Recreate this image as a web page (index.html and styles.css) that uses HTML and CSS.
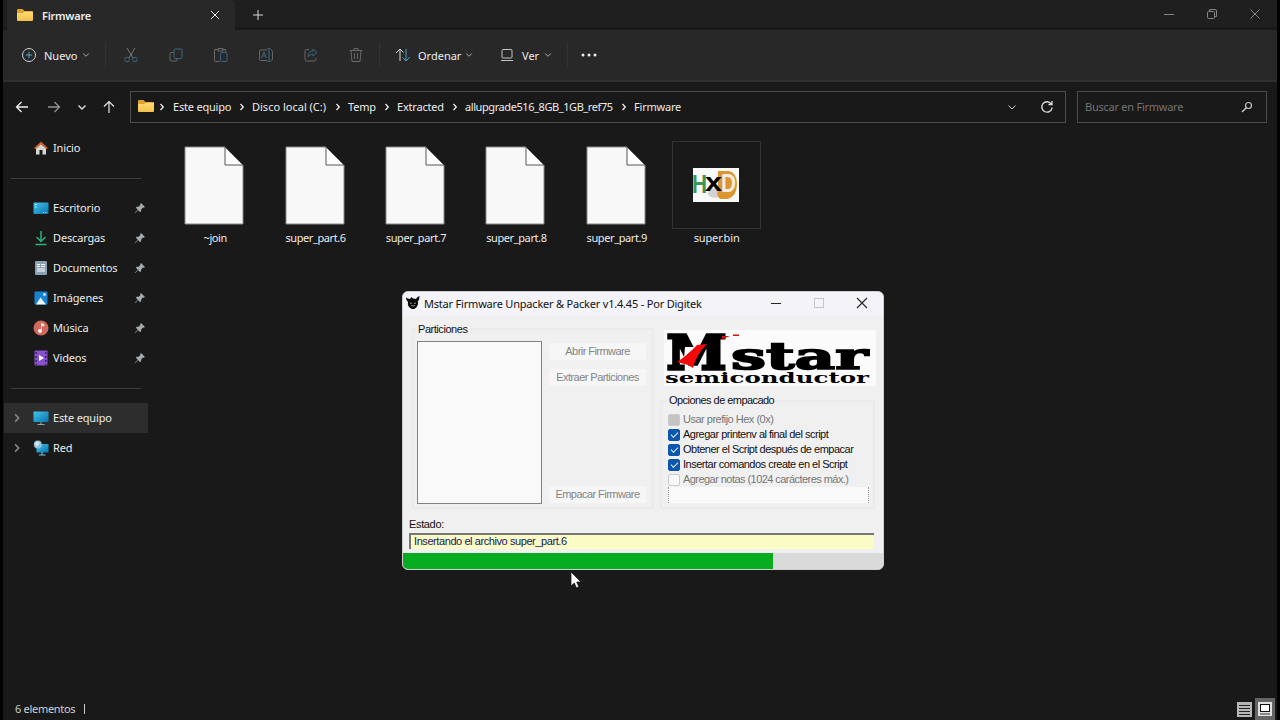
FILE: index.html
```html
<!DOCTYPE html>
<html lang="es">
<head>
    <meta charset="UTF-8">
    <meta name="viewport" content="width=device-width, initial-scale=1.0">
    <title>Firmware</title>
    <link rel="stylesheet" href="styles.css">
</head>
<body>
    <svg class="defs" width="0" height="0">
        <linearGradient id="blue" x1="0" y1="0" x2="1" y2="1"><stop offset="0" stop-color="#43c4ee"/><stop offset="1" stop-color="#0873ae"/></linearGradient>
        <linearGradient id="gold" x1="0" y1="0" x2="0" y2="1"><stop offset="0" stop-color="#ffdc70"/><stop offset="1" stop-color="#f3c04d"/></linearGradient>
        <symbol id="folder" viewBox="0 0 16 14"><path d="M0 2Q0 1 1 1H5.5L7.5 3H15Q16 3 16 4V8H0z" fill="#e0a02c"/><path d="M0 5H6L8 3.7H15Q16 3.7 16 4.7V12Q16 13 15 13H1Q0 13 0 12z" fill="url(#gold)"/></symbol>
        <symbol id="chev" viewBox="0 0 8 8"><path d="M1.2 2.5L4 5.3L6.8 2.5" fill="none" stroke="currentColor"/></symbol>
        <symbol id="right" viewBox="0 0 8 8"><path d="M2.5 1L5.3 4L2.5 7" fill="none" stroke="currentColor" stroke-width="1.3"/></symbol>
        <symbol id="pin" viewBox="0 0 12 12"><path d="M7 1L11 5L9.8 5.8L8.9 5.6L7.2 7.4L7 9.6L5.9 10L4 8L1.5 11L1 10.5L3.7 7.7L2 5.8L2.6 4.8L4.7 4.7L6.4 3L6.2 2z" fill="#a5acb0"/></symbol>
        <symbol id="page" viewBox="0 0 60 80"><path d="M1 1H41L59 19V78H1z" fill="#f8f8f8" stroke="#8a8a8a"/><path d="M41 1V19H59z" fill="#fff" stroke="#555"/></symbol>
    </svg>
    <div class="window">
        <div class="tabbar">
            <div class="tab">
                <svg class="tab-icon" width="16" height="14"><use href="#folder"/></svg>
                <span class="tab-title">Firmware</span>
                <svg class="tab-close" width="10" height="10" viewBox="0 0 10 10"><path d="M1 1L9 9M9 1L1 9" stroke="#e8e8e8" fill="none"/></svg>
            </div>
            <svg class="new-tab" width="12" height="12" viewBox="0 0 12 12"><path d="M6 1V11M1 6H11" stroke="#d8d8d8" fill="none"/></svg>
            <div class="controls">
                <svg width="12" height="12" viewBox="0 0 12 12"><path d="M1 6.5H11" stroke="#858585"/></svg>
                <svg width="12" height="12" viewBox="0 0 12 12" fill="none" stroke="#858585"><rect x="1.5" y="3.5" width="7" height="7" rx="1"/><path d="M3.5 3V1.5H9Q10.5 1.5 10.5 3V8.5H9"/></svg>
                <svg width="12" height="12" viewBox="0 0 12 12"><path d="M1.5 1.5L10.5 10.5M10.5 1.5L1.5 10.5" stroke="#858585"/></svg>
            </div>
        </div>

        <div class="toolbar">
            <div class="tool new">
                <svg width="16" height="16" viewBox="0 0 16 16" fill="none"><circle cx="8" cy="8" r="6.5" stroke="#c9d2d8"/><path d="M8 4.8V11.2M4.8 8H11.2" stroke="#56a5cf"/></svg>
                <span>Nuevo</span>
                <svg class="caret" width="8" height="8"><use href="#chev"/></svg>
            </div>
            <i class="sep"></i>
            <div class="tool-icons">
                <svg width="16" height="16" viewBox="0 0 16 16" fill="none"><path d="M4 1L10 11M12 1L6 11" stroke="#787878"/><circle cx="4" cy="12.5" r="2.3" stroke="#3c6680"/><circle cx="12" cy="12.5" r="2.3" stroke="#3c6680"/></svg>
                <svg width="16" height="16" viewBox="0 0 16 16" fill="none"><path d="M5.5 5.5H3Q2 5.5 2 6.500V13Q2 14 3 14H8Q9 14 9 13V11.500" stroke="#666"/><rect x="6" y="2" width="8" height="9.500" rx="1" stroke="#3c6680"/></svg>
                <svg width="16" height="16" viewBox="0 0 16 16" fill="none"><path d="M6.500 14.500H2.500Q1.500 14.500 1.500 13.500V2.500H5V1.500H10V2.500H12.500V4.500M5 2V4H10V2" stroke="#6a6a6a"/><rect x="7.500" y="5.500" width="6.500" height="9" rx="1" stroke="#3c6680"/></svg>
                <svg width="16" height="16" viewBox="0 0 16 16" fill="none"><path d="M9 13.500H2.500Q1.500 13.500 1.500 12.500V4Q1.500 3 2.500 3H9M13 3Q14.500 3 14.500 4.500V12Q14.500 13.500 13 13.500" stroke="#666"/><path d="M3.500 11L6 5L8.500 11M4.500 9H7.500M11 2V14.500M9.500 1.500H12.500M9.500 14.500H12.500" stroke="#3c6680"/></svg>
                <svg width="16" height="16" viewBox="0 0 16 16" fill="none"><path d="M6 2.500H3.500Q2 2.500 2 4V12.500Q2 14 3.500 14H11.500Q13 14 13 12.500V11" stroke="#666"/><path d="M10 2L14 5.500L10 9V7Q7 7 5 10Q5 4 10 4z" stroke="#3c6680"/></svg>
                <svg width="16" height="16" viewBox="0 0 16 16" fill="none" stroke="#6a6a6a"><path d="M1.500 3.500H14.500M6 3.500V1.500H10V3.500M3 3.500L4 14.500H12L13 3.500M6.500 6V12M9.500 6V12"/></svg>
            </div>
            <i class="sep"></i>
            <div class="tool sort">
                <svg width="16" height="16" viewBox="0 0 16 16" fill="none"><path d="M5 14V2M1 6L5 2L8.500 5.500" stroke="#d8d8d8"/><path d="M11 2V14M7.500 10.500L11 14L15 10" stroke="#4c9bc7"/></svg>
                <span>Ordenar</span>
                <svg class="caret" width="8" height="8"><use href="#chev"/></svg>
            </div>
            <div class="tool view">
                <svg width="14" height="14" viewBox="0 0 14 14" fill="none" stroke="#c4c4c4"><rect x="2" y="1.500" width="10" height="8.500" rx="1"/><path d="M1 12.500H13"/></svg>
                <span>Ver</span>
                <svg class="caret" width="8" height="8"><use href="#chev"/></svg>
            </div>
            <i class="sep last"></i>
            <svg class="more" width="16" height="4" viewBox="0 0 16 4" fill="#eee"><circle cx="2" cy="2" r="1.500"/><circle cx="8" cy="2" r="1.500"/><circle cx="14" cy="2" r="1.500"/></svg>
        </div>

        <div class="navbar">
            <div class="arrows">
                <svg width="14" height="14" viewBox="0 0 14 14" stroke="#f2f2f2" fill="none" stroke-width="1.300"><path d="M13 7H1.500M6.500 2L1.500 7L6.500 12"/></svg>
                <svg width="14" height="14" viewBox="0 0 14 14" stroke="#929292" fill="none" stroke-width="1.300"><path d="M1 7H12.500M7.500 2L12.500 7L7.500 12"/></svg>
                <svg width="10" height="10" viewBox="0 0 10 10" stroke="#ddd" fill="none" stroke-width="1.400"><path d="M1.500 3.500L5 7L8.500 3.500"/></svg>
                <svg width="14" height="14" viewBox="0 0 14 14" stroke="#e4e4e4" fill="none" stroke-width="1.200"><path d="M7 13V1.500M2 6.500L7 1.500L12 6.500"/></svg>
            </div>
            <div class="address">
                <svg class="addr-folder" width="16" height="14"><use href="#folder"/></svg>
                <svg class="crumb-arrow first" width="8" height="8"><use href="#right"/></svg>
                <span class="c1">Este equipo</span><svg class="crumb-arrow" width="8" height="8"><use href="#right"/></svg>
                <span class="c2">Disco local (C:)</span><svg class="crumb-arrow" width="8" height="8"><use href="#right"/></svg>
                <span class="c3">Temp</span><svg class="crumb-arrow" width="8" height="8"><use href="#right"/></svg>
                <span class="c4">Extracted</span><svg class="crumb-arrow" width="8" height="8"><use href="#right"/></svg>
                <span class="c5">allupgrade516_8GB_1GB_ref75</span><svg class="crumb-arrow" width="8" height="8"><use href="#right"/></svg>
                <span class="c6">Firmware</span>
                <svg class="addr-caret" width="10" height="10" viewBox="0 0 10 10"><path d="M1.500 3.500L5 7L8.500 3.500" fill="none" stroke="#ccc"/></svg>
                <svg class="refresh" width="14" height="14" viewBox="0 0 14 14" fill="none" stroke="#ddd" stroke-width="1.300"><path d="M11.300 4A5.200 5.200 0 1 0 12.200 7.500M12 1V4.500H8.500"/></svg>
            </div>
            <div class="search">
                <span>Buscar en Firmware</span>
                <svg width="12" height="12" viewBox="0 0 12 12" fill="none" stroke="#c4c4c4"><circle cx="7.500" cy="4.500" r="3" stroke-width="1.200"/><path d="M5.300 6.700L1 11" stroke-width="1.500"/></svg>
            </div>
        </div>

        <div class="main">
            <div class="sidebar">
                <div class="row home">
                    <svg class="ico" width="16" height="16" viewBox="0 0 16 16"><path d="M3 7L8 3L13 7V14.500H9.500V10H6.500V14.500H3z" fill="#d9d4d1"/><path d="M1 8L8 1.500L15 8L13.500 9L8 4.500L2.500 9z" fill="#c6602c"/></svg>
                    <span>Inicio</span>
                </div>
                <hr>
                <div class="row">
                    <svg class="ico" width="16" height="16" viewBox="0 0 16 16"><rect x="0.500" y="2.500" width="15" height="11.500" rx="1" fill="url(#blue)"/><path d="M2 4.500H3.500M2 7H3.500M10 12.500H11M12.500 12.500H13.500" stroke="#dff6ff" stroke-width="1.200"/></svg>
                    <span>Escritorio</span><svg class="pin" width="12" height="12"><use href="#pin"/></svg>
                </div>
                <div class="row">
                    <svg class="ico" width="16" height="16" viewBox="0 0 16 16"><path d="M8 1V11M3.500 7L8 11.500L12.500 7M2.500 14.500H13.500" fill="none" stroke="#2fae7c" stroke-width="1.500"/></svg>
                    <span>Descargas</span><svg class="pin" width="12" height="12"><use href="#pin"/></svg>
                </div>
                <div class="row">
                    <svg class="ico" width="16" height="16" viewBox="0 0 16 16"><rect x="2" y="1" width="12" height="14" rx="1" fill="#8ba1b1"/><path d="M4 4.500H7M8 4.500H12M4 6.500H7M8 6.500H12M4 9H12M4 11H12" stroke="#fff"/></svg>
                    <span>Documentos</span><svg class="pin" width="12" height="12"><use href="#pin"/></svg>
                </div>
                <div class="row">
                    <svg class="ico" width="16" height="16" viewBox="0 0 16 16"><rect x="1.500" y="1.500" width="13" height="13" rx="1" fill="#1684d2"/><path d="M3 14.500L7.500 7.500L13 14.500z" fill="#eef8ff"/><circle cx="11.500" cy="4.500" r="1.300" fill="#fff"/></svg>
                    <span>Imágenes</span><svg class="pin" width="12" height="12"><use href="#pin"/></svg>
                </div>
                <div class="row">
                    <svg class="ico" width="16" height="16" viewBox="0 0 16 16"><circle cx="8" cy="8" r="7.500" fill="#d3685c"/><path d="M8.500 10.500V3.500L11 4.500V6L8.500 5.500" fill="#fff" stroke="#fff" stroke-width=".6"/><circle cx="7" cy="11" r="1.900" fill="#fff"/></svg>
                    <span>Música</span><svg class="pin" width="12" height="12"><use href="#pin"/></svg>
                </div>
                <div class="row">
                    <svg class="ico" width="16" height="16" viewBox="0 0 16 16"><rect x="1.500" y="0.500" width="13" height="15" rx="1" fill="#8653cc"/><path d="M3.200 2V15M12.800 2V15" stroke="#3f2173" stroke-width="1.500" stroke-dasharray="2 2"/><path d="M6 5L11 8L6 11z" fill="#fff"/></svg>
                    <span>Videos</span><svg class="pin" width="12" height="12"><use href="#pin"/></svg>
                </div>
                <hr>
                <div class="row selected">
                    <svg class="expand" width="10" height="10" viewBox="0 0 8 8"><use href="#right"/></svg>
                    <svg class="ico" width="16" height="16" viewBox="0 0 16 16"><rect x="0.500" y="1.500" width="15" height="10.500" rx=".7" fill="url(#blue)"/><path d="M8 12V14.500M4.500 14.500H11.500" stroke="#8da6b3"/></svg>
                    <span>Este equipo</span>
                </div>
                <div class="row">
                    <svg class="expand" width="10" height="10" viewBox="0 0 8 8"><use href="#right"/></svg>
                    <svg class="ico" width="16" height="16" viewBox="0 0 16 16"><rect x="3.500" y="4" width="12" height="8.500" fill="url(#blue)"/><path d="M9 12V15M6 15H12.500" stroke="#7ec6e5"/><circle cx="4.800" cy="4.500" r="4" fill="#8fc2d7"/><path d="M2 3Q5 0 7 3L5 5L4 7L2.500 5z" fill="#d3e8ef"/></svg>
                    <span>Red</span>
                </div>
            </div>
            <div class="files">
                <div class="file"><svg class="page" width="60" height="80"><use href="#page"/></svg><span>~join</span></div>
                <div class="file"><svg class="page" width="60" height="80"><use href="#page"/></svg><span>super_part.6</span></div>
                <div class="file"><svg class="page" width="60" height="80"><use href="#page"/></svg><span>super_part.7</span></div>
                <div class="file"><svg class="page" width="60" height="80"><use href="#page"/></svg><span>super_part.8</span></div>
                <div class="file"><svg class="page" width="60" height="80"><use href="#page"/></svg><span>super_part.9</span></div>
                <div class="file">
                    <div class="thumb">
                        <svg width="46" height="34" viewBox="0 0 46 34"><rect width="46" height="34" fill="#fafafa"/><ellipse cx="22" cy="25" rx="7" ry="5" fill="#d2d2d5"/><path d="M25 3H36Q44 5 44 16Q44 28 35 31H27Q23 28 25 22z" fill="#dc962f"/><text x="-1" y="25" class="hxd-h" textLength="15" lengthAdjust="spacingAndGlyphs">H</text><text x="28" y="24" class="hxd-d" textLength="15" lengthAdjust="spacingAndGlyphs">D</text><text x="12" y="23" class="hxd-x" textLength="17" lengthAdjust="spacingAndGlyphs">x</text></svg>
                    </div>
                    <span class="bin">super.bin</span>
                </div>
            </div>
        </div>

        <div class="statusbar">
            <span>6 elementos</span><i></i>
            <svg class="list-view" width="15" height="15" viewBox="0 0 15 15"><rect width="15" height="15" fill="#b6b6b6"/><path d="M2 3.500H13M2 6.500H13M2 9.500H13M2 12.500H13" stroke="#222"/></svg>
            <div class="icon-view"><svg width="14" height="14" viewBox="0 0 14 14"><rect width="14" height="14" fill="#e0e0e0"/><rect x="2.500" y="2.500" width="9" height="7" fill="#fff" stroke="#111"/><path d="M2 12H12" stroke="#333"/></svg></div>
        </div>
    </div>

    <div class="dialog">
        <div class="titlebar">
            <svg width="14" height="14" viewBox="0 0 14 14"><path d="M0 1.500L2 2.500L4 3L5.500 1L7 2.500L10 3L11.500 1L13.500 0L13 4L11.800 5Q13 10 9 12.500Q7 13.500 5 12.500Q1 10 2 6L.5 4z" fill="#080808"/><path d="M4 7L6 7.500M10 7L8 7.500M5 9.500L7 10L9 9.500" stroke="#ccc" stroke-width=".7" fill="none"/></svg>
            <span>Mstar Firmware Unpacker &amp; Packer v1.4.45 - Por Digitek</span>
            <div class="dlg-controls">
                <svg width="12" height="12" viewBox="0 0 12 12"><path d="M1 6.500H11" stroke="#222" stroke-width="1.200"/></svg>
                <svg width="12" height="12" viewBox="0 0 12 12"><rect x="1.500" y="1.500" width="9" height="9" fill="none" stroke="#c5c5cb"/></svg>
                <svg width="12" height="12" viewBox="0 0 12 12"><path d="M1 1L11 11M11 1L1 11" stroke="#222" stroke-width="1.100"/></svg>
            </div>
        </div>
        <div class="dlg-body">
            <div class="group parts">
                <span class="legend">Particiones</span>
                <div class="listbox"></div>
                <div class="buttons">
                    <button disabled>Abrir Firmware</button>
                    <button disabled>Extraer Particiones</button>
                    <button class="pack" disabled>Empacar Firmware</button>
                </div>
            </div>
            <div class="right">
                <svg class="logo" width="212" height="56" viewBox="0 0 212 56"><rect width="212" height="56" fill="#fbfbfb"/><text class="logo-m" x="3" y="39" textLength="59" lengthAdjust="spacingAndGlyphs">M</text><text class="logo-star" x="67" y="39" textLength="137" lengthAdjust="spacingAndGlyphs">star</text><path d="M21 17H32L25 23L20 28z" fill="#fbfbfb"/><path d="M43 14Q32 25 29 38L24 35L13 32Q24 25 33 15z" fill="#f40808"/><path d="M58 6H66L61 8L58 10zM69 4.500H75V6H69z" fill="#d01414"/><text class="logo-semi" x="1" y="52.500" textLength="204" lengthAdjust="spacingAndGlyphs">semiconductor</text></svg>
                <div class="group options">
                    <span class="legend">Opciones de empacado</span>
                    <div class="check off"><i class="box gray"></i><span>Usar prefijo Hex (0x)</span></div>
                    <div class="check"><i class="box on"></i><span>Agregar printenv al final del script</span></div>
                    <div class="check"><i class="box on"></i><span>Obtener el Script después de empacar</span></div>
                    <div class="check"><i class="box on"></i><span>Insertar comandos create en el Script</span></div>
                    <div class="check off"><i class="box"></i><span class="long">Agregar notas (1024 carácteres máx.)</span></div>
                    <div class="notes"></div>
                </div>
            </div>
        </div>
        <div class="state-label">Estado:</div>
        <div class="state">Insertando el archivo super_part.6</div>
        <div class="progress"><div class="bar" style="width: 77%"></div></div>
    </div>

    <svg class="cursor" width="12" height="18" viewBox="0 0 12 18"><path d="M1 1V15L4.300 12L6.300 16.800L8.800 15.700L6.700 11H11z" fill="#fff" stroke="#111" stroke-width=".7"/></svg>
</body>
</html>
```
FILE: styles.css
```css
* {
    box-sizing: border-box;
}
body {
    margin: 0;
    width: 1280px;
    height: 720px;
    overflow: hidden;
    background: #000;
    color: #ececec;
    font-family: "Noto Sans", "Open Sans", sans-serif;
    font-size: 11px;
    white-space: nowrap;
}
svg {
    display: block;
    flex: none;
}
.defs {
    position: absolute;
}
.window {
    display: flex;
    flex-direction: column;
    width: 1274px;
    height: 720px;
    margin-left: 3px;
    background: #191919;
}

/* tabs */
.tabbar {
    display: flex;
    align-items: center;
    height: 30px;
    background: #1f1f1f;
    border-bottom: 3px solid #191919;
}
.tab {
    display: flex;
    align-items: center;
    width: 228px;
    height: 30px;
    margin: 0 0 -3px 4px;
    padding-left: 10px;
    background: #282828;
    border-radius: 0 6px 0 0;
}
.tab-title {
    width: 168px;
    margin-left: 9px;
    font-weight: 600;
    font-size: 11px;
    letter-spacing: -0.25px;
}
.new-tab {
    margin: 3px 0 0 17px;
}
.controls {
    display: flex;
    gap: 31px;
    margin-left: auto;
    margin-right: 16px;
}

/* toolbar */
.toolbar {
    display: flex;
    align-items: center;
    height: 52px;
    flex: none;
    background: #282828;
    border-bottom: 2px solid #303030;
}
.tool {
    display: flex;
    align-items: center;
    height: 20px;
}
.tool .caret {
    color: #aaa;
}
.new {
    width: 84px;
    margin-left: 18px;
}
.new span {
    width: 38px;
    margin-left: 7px;
}
.sep {
    width: 1px;
    height: 26px;
    background: #333;
}
.tool-icons {
    display: flex;
    gap: 29px;
    width: 273px;
    padding-left: 17px;
}
.sort {
    width: 104px;
    padding-left: 15px;
}
.sort span {
    width: 47px;
    margin-left: 7px;
}
.view {
    width: 83px;
    padding-left: 16px;
}
.view span {
    width: 22px;
    margin-left: 8px;
}
.more {
    margin-left: 13px;
}

/* address bar */
.navbar {
    display: flex;
    align-items: center;
    height: 50px;
    flex: none;
}
.arrows {
    display: flex;
    align-items: center;
    width: 127px;
    padding-left: 12px;
}
.arrows svg:nth-child(2) {
    margin: 0 16px 0 18px;
}
.arrows svg:nth-child(4) {
    margin-left: 15px;
}
.address {
    display: flex;
    align-items: center;
    width: 936px;
    height: 32px;
    border: 1px solid #4c4c4c;
}
.addr-folder {
    margin: -3px 0 0 7px;
}
.crumb-arrow {
    margin: 0 6px 0 7px;
}
.crumb-arrow.first {
    margin: 0 7px 0 4px;
}
.c1 { width: 58px; }
.c2 { width: 75px; }
.c3 { width: 28px; }
.c4 { width: 47px; }
.c5 { width: 148px; }
.c6 { width: 47px; }
.address span {
    padding-bottom: 2px;
    letter-spacing: -0.2px;
}
.address .c2 {
    letter-spacing: 0;
}
.address .c5 {
    letter-spacing: -0.42px;
}
.addr-caret {
    margin-left: auto;
}
.refresh {
    margin: 0 11px 0 23px;
}
.search {
    display: flex;
    align-items: center;
    justify-content: space-between;
    width: 190px;
    height: 32px;
    margin-left: 11px;
    padding: 0 13px 0 7px;
    border: 1px solid #4c4c4c;
    color: #747474;
}
.search span {
    padding-bottom: 2px;
    letter-spacing: -0.25px;
}

/* content */
.main {
    display: flex;
    flex: 1;
}
.sidebar {
    width: 145px;
    padding: 1px 0 0 1px;
}
.row {
    position: relative;
    display: flex;
    align-items: center;
    height: 30px;
    padding-left: 29px;
}
.row .ico {
    margin-right: 4px;
}
.row span {
    padding-bottom: 2px;
    letter-spacing: -0.15px;
}
.row .expand {
    position: absolute;
    left: 8px;
    color: #888;
}
.row .pin {
    position: absolute;
    right: 2px;
}
.row.selected {
    background: #2d2d2d;
}
.sidebar hr {
    width: 130px;
    height: 1px;
    margin: 15px 0 14px 7px;
    border: none;
    background: #3c3c3c;
}
.files {
    display: flex;
    padding: 9px 0 0 16px;
}
.file {
    display: flex;
    flex-direction: column;
    align-items: center;
    width: 100.4px;
}
.file span {
    padding-left: 2px;
    letter-spacing: -0.4px;
}
.file .bin {
    padding-left: 1px;
    letter-spacing: -0.15px;
}
.page {
    margin: 5px 0 4px;
}
.thumb {
    display: flex;
    align-items: center;
    justify-content: center;
    width: 89px;
    height: 88px;
    margin-bottom: 1px;
    border: 1px solid #343434;
}
.hxd-h, .hxd-d, .hxd-x {
    font: bold 25px "Liberation Sans", sans-serif;
}
.hxd-h { fill: #3d9557; }
.hxd-d { fill: #f4ece0; }
.hxd-x { fill: #000; }

/* status bar */
.statusbar {
    display: flex;
    align-items: center;
    height: 22px;
    padding-left: 12px;
    color: #d0d0d0;
    letter-spacing: -0.3px;
}
.statusbar span {
    padding-bottom: 1px;
}
.statusbar i {
    width: 1px;
    height: 10px;
    margin-left: 9px;
    background: #ccc;
}
.list-view {
    margin-left: auto;
}
.icon-view {
    display: flex;
    align-items: center;
    justify-content: center;
    width: 20px;
    height: 22px;
    margin: 0 2px 0 3px;
    background: #646464;
}

/* packer window */
.dialog {
    position: absolute;
    left: 402px;
    top: 291px;
    width: 482px;
    height: 279px;
    border: 1px solid #cfcfcf;
    border-radius: 6px;
    background: #f0f0f0;
    color: #111;
    overflow: hidden;
    font-family: "Liberation Sans", Arial, sans-serif;
    font-size: 11px;
    line-height: 13px;
    letter-spacing: -0.5px;
}
.titlebar {
    display: flex;
    align-items: center;
    height: 24px;
    padding: 0 0 2px 3px;
    background: #f3f3f8;
    font-family: "Noto Sans", "Open Sans", sans-serif;
    letter-spacing: -0.2px;
}
.titlebar span {
    margin-left: 4px;
}
.dlg-controls {
    display: flex;
    gap: 31px;
    margin-left: auto;
    margin-right: 15px;
}
.dlg-body {
    display: flex;
    height: 202px;
    padding: 12px 7px 0 9px;
}
.group {
    position: relative;
    border: 2px solid #eaeaea;
}
.legend {
    position: absolute;
    top: -7px;
    left: 2px;
    padding: 0 2px;
    background: #f0f0f0;
    letter-spacing: -0.45px;
}
.parts {
    display: flex;
    width: 242px;
    height: 181px;
    padding: 11px 5px 0 3px;
}
.listbox {
    width: 125px;
    height: 163px;
    border: 1px solid #828282;
    background: #f9f9f9;
}
.buttons {
    display: flex;
    flex-direction: column;
    width: 97px;
    height: 163px;
    margin-left: 7px;
    padding: 2px 0 1px;
}
.buttons button {
    height: 17px;
    margin-bottom: 9px;
    padding: 0;
    border: none;
    border-radius: 2px;
    background: #f6f6f6;
    color: #858585;
    font: inherit;
    letter-spacing: -0.55px;
}
.buttons .pack {
    margin: auto 0 0;
}
.right {
    margin-left: 6px;
}
.logo {
    margin: 2px 0 0 4px;
}
.logo-m, .logo-star {
    font: bold 38px "DejaVu Serif", serif;
    letter-spacing: 0;
    stroke: #000;
    stroke-width: 1.6px;
}
.logo-m {
    font-size: 46px;
    stroke-width: 3.5px;
}
.logo-semi {
    font: bold 14px "DejaVu Serif", serif;
    letter-spacing: 0;
}
.options {
    width: 215px;
    height: 109px;
    margin-top: 14px;
    padding: 10px 5px 0 6px;
}
.options .legend {
    top: -8px;
    left: 5px;
    letter-spacing: -0.55px;
}
.check {
    display: flex;
    align-items: center;
    height: 15px;
}
.check span {
    margin-left: 3px;
}
.check.off {
    color: #777;
}
.check .long {
    letter-spacing: -0.55px;
}
.box {
    position: relative;
    width: 12px;
    height: 12px;
    border: 1px solid #cacaca;
    border-radius: 2px;
    background: #f8f8f8;
}
.box.gray {
    background: #c4c4c4;
}
.box.on {
    border-color: #0b57ad;
    background: #0b57ad;
}
.box.on::after {
    content: "";
    position: absolute;
    left: 2px;
    top: 2px;
    width: 6px;
    height: 3px;
    border: solid #e4efff;
    border-width: 0 0 1px 1px;
    transform: rotate(-45deg);
}
.notes {
    height: 16px;
    width: 201px;
    border: dotted #999;
    border-width: 0 1px;
    background: #f9f9f9;
}
.state-label {
    height: 15px;
    padding-left: 6px;
    letter-spacing: -0.35px;
}
.state {
    width: 465px;
    height: 16px;
    margin-left: 6px;
    padding-left: 3px;
    border: solid #777;
    border-width: 2px 0 0 2px;
    background: #fbfbc5;
    color: #151565;
    letter-spacing: -0.42px;
}
.progress {
    height: 16px;
    margin-top: 4px;
    background: #dadada;
}
.bar {
    height: 16px;
    background: #06ad20;
}
.cursor {
    position: absolute;
    left: 570px;
    top: 571px;
}
```
